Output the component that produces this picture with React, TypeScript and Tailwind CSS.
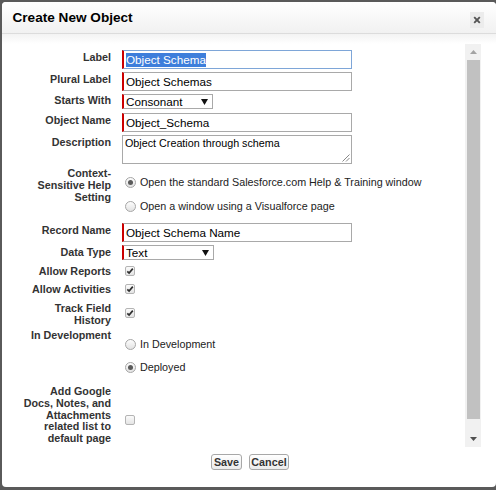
import React from "react";

function Label({ children, pt = "pt-px" }: { children: React.ReactNode; pt?: string }) {
  return (
    <div className={`w-[109px] shrink-0 text-right font-bold text-[10.75px] leading-[12px] text-[#333] ${pt}`}>
      {children}
    </div>
  );
}

function TextInput({ value, focused }: { value: string; focused?: boolean }) {
  return (
    <div
      className={`w-[230px] h-[19px] border border-l-2 border-l-[#cc0000] bg-white pl-[2px] flex items-center text-[11.7px] text-black whitespace-nowrap ${
        focused ? "border-[#7ea6d8] border-l-[#cc0000]" : "border-[#a9a9a9] border-l-[#cc0000]"
      }`}
    >
      {focused ? <span className="bg-[#3d7edb] text-white leading-[14px]">{value}</span> : <span>{value}</span>}
    </div>
  );
}

function Select({ value, w }: { value: string; w: string }) {
  return (
    <div
      className={`${w} h-[15px] border border-[#a9a9a9] border-l-2 border-l-[#cc0000] bg-white pl-[2px] pr-[4px] flex items-center justify-between text-[11.7px] text-black`}
    >
      <span className="leading-[13px]">{value}</span>
      <svg width="7" height="6" viewBox="0 0 7 6">
        <path d="M0 0 L7 0 L3.5 6 Z" fill="#111" />
      </svg>
    </div>
  );
}

function Radio({ checked, label }: { checked?: boolean; label: string }) {
  return (
    <div className="flex items-center h-[13px] ml-[3px]">
      <div className="w-[11px] h-[11px] rounded-full border border-[#a6a6a6] bg-gradient-to-b from-[#fdfdfd] to-[#e2e2e2] flex items-center justify-center shrink-0">
        {checked && <div className="w-[5px] h-[5px] rounded-full bg-[#5a5a5a]" />}
      </div>
      <span className="ml-[4px] text-[10.75px] leading-[13px] text-[#222] whitespace-nowrap">{label}</span>
    </div>
  );
}

function Checkbox({ checked, className = "" }: { checked?: boolean; className?: string }) {
  return (
    <div
      className={`w-[10px] h-[10px] ml-[3px] rounded-[2px] border border-[#b4b4b4] bg-gradient-to-b from-[#fbfbfb] to-[#e4e4e4] flex items-center justify-center shrink-0 ${className}`}
    >
      {checked && (
        <svg width="8" height="8" viewBox="0 0 8 8">
          <path d="M1.3 4.3 L3.1 6.1 L6.8 1.6" fill="none" stroke="#2f2f2f" strokeWidth="1.7" />
        </svg>
      )}
    </div>
  );
}

export default function App() {
  return (
    <div className="h-[490px] w-[496px] bg-[#5a5a5a] pt-[2px] pl-[2px] overflow-hidden font-['Liberation_Sans',Arial,sans-serif]">
      <div className="w-[494px] h-[485px] bg-white rounded-[4px] flex flex-col overflow-hidden">
        {/* Header */}
        <div className="h-[32px] shrink-0 border-b border-[#dcdcdc] bg-gradient-to-b from-white to-[#f1f1f1] flex items-center justify-between pl-[10.5px] pr-[12px]">
          <h2 className="text-[13.6px] font-bold text-black leading-[16px]">Create New Object</h2>
          <button className="w-[14px] h-[16px] mt-[4px] bg-[#ececec] flex items-center justify-center">
            <svg width="10" height="10" viewBox="0 0 10 10">
              <path d="M2.2 2.2 L7.8 7.8 M7.8 2.2 L2.2 7.8" stroke="#555" strokeWidth="1.9" />
            </svg>
          </button>
        </div>
        <div className="h-[10px] shrink-0 bg-gradient-to-b from-[#f3f3f3] to-white" />

        {/* Body with scroll */}
        <div className="flex h-[403px] shrink-0">
          <div className="flex-1 overflow-hidden pt-[6px]">
            <div className="flex">
              <Label>Label</Label>
              <div className="ml-[11px]">
                <TextInput value="Object Schema" focused />
              </div>
            </div>
            <div className="flex mt-[3px]">
              <Label>Plural Label</Label>
              <div className="ml-[11px]">
                <TextInput value="Object Schemas" />
              </div>
            </div>
            <div className="flex mt-[3px]">
              <Label pt="pt-0">Starts With</Label>
              <div className="ml-[11px]">
                <Select value="Consonant" w="w-[91px]" />
              </div>
            </div>
            <div className="flex mt-[4px]">
              <Label>Object Name</Label>
              <div className="ml-[11px]">
                <TextInput value="Object_Schema" />
              </div>
            </div>
            <div className="flex mt-[3px]">
              <Label>Description</Label>
              <div className="ml-[11px]">
                <div className="relative w-[230px] h-[29px] border border-[#a9a9a9] bg-white pl-[2px] pt-[1px] text-[10.75px] leading-[13px] text-black">
                  Object Creation through schema
                  <svg className="absolute right-[1px] bottom-[1px]" width="9" height="9" viewBox="0 0 9 9">
                    <path d="M8.5 1.5 L1.5 8.5 M8.5 5 L5 8.5" stroke="#888" strokeWidth="1" />
                  </svg>
                </div>
              </div>
            </div>
            <div className="flex mt-[3px]">
              <Label pt="pt-0">
                Context-
                <br />
                Sensitive Help
                <br />
                Setting
              </Label>
              <div className="ml-[11px] pt-[9px] flex flex-col gap-[11px]">
                <Radio checked label="Open the standard Salesforce.com Help & Training window" />
                <Radio label="Open a window using a Visualforce page" />
              </div>
            </div>
            <div className="flex mt-[10px]">
              <Label>Record Name</Label>
              <div className="ml-[11px]">
                <TextInput value="Object Schema Name" />
              </div>
            </div>
            <div className="flex mt-[3px]">
              <Label pt="pt-px">Data Type</Label>
              <div className="ml-[11px]">
                <Select value="Text" w="w-[92px]" />
              </div>
            </div>
            <div className="flex items-center mt-[5px]">
              <Label pt="pt-0">Allow Reports</Label>
              <div className="ml-[11px]">
                <Checkbox checked />
              </div>
            </div>
            <div className="flex items-center mt-[6px]">
              <Label pt="pt-0">Allow Activities</Label>
              <div className="ml-[11px]">
                <Checkbox checked />
              </div>
            </div>
            <div className="flex mt-[7px]">
              <Label pt="pt-0">
                Track Field
                <br />
                History
              </Label>
              <div className="ml-[11px] pt-[6px]">
                <Checkbox checked />
              </div>
            </div>
            <div className="flex mt-[3px]">
              <Label pt="pt-0">In Development</Label>
              <div className="ml-[11px] pt-[9px] flex flex-col gap-[10px]">
                <Radio label="In Development" />
                <Radio checked label="Deployed" />
              </div>
            </div>
            <div className="flex mt-[12px]">
              <div className="w-[109px] shrink-0 text-right font-bold text-[10.75px] leading-[11.75px] text-[#333]">
                Add Google
                <br />
                Docs, Notes, and
                <br />
                Attachments
                <br />
                related list to
                <br />
                default page
              </div>
              <div className="ml-[11px] pt-[29px]">
                <Checkbox />
              </div>
            </div>
          </div>

          {/* Scrollbar */}
          <div className="w-[16px] mr-[15px] shrink-0 bg-[#f1f1f1] flex flex-col">
            <div className="h-[16px] flex items-center justify-center">
              <svg width="7" height="4" viewBox="0 0 7 4">
                <path d="M0 4 L7 4 L3.5 0 Z" fill="#a3a3a3" />
              </svg>
            </div>
            <div className="h-[359px] mx-[2px] ml-[2px] mr-[1px] bg-[#c1c1c1]" />
            <div className="flex-1" />
            <div className="h-[17px] flex items-center justify-center">
              <svg width="7" height="4" viewBox="0 0 7 4">
                <path d="M0 0 L7 0 L3.5 4 Z" fill="#505050" />
              </svg>
            </div>
          </div>
        </div>

        {/* Footer buttons */}
        <div className="flex justify-center gap-[7px] mt-[7px] pl-[2px]">
          <button className="w-[31px] h-[16px] rounded-[3px] border border-[#a8a8a8] bg-gradient-to-b from-white to-[#ebebeb] text-[10.75px] font-bold text-[#333] leading-[14px]">
            Save
          </button>
          <button className="w-[40px] h-[16px] rounded-[3px] border border-[#a8a8a8] bg-gradient-to-b from-white to-[#ebebeb] text-[10.75px] font-bold text-[#333] leading-[14px]">
            Cancel
          </button>
        </div>
      </div>
    </div>
  );
}
